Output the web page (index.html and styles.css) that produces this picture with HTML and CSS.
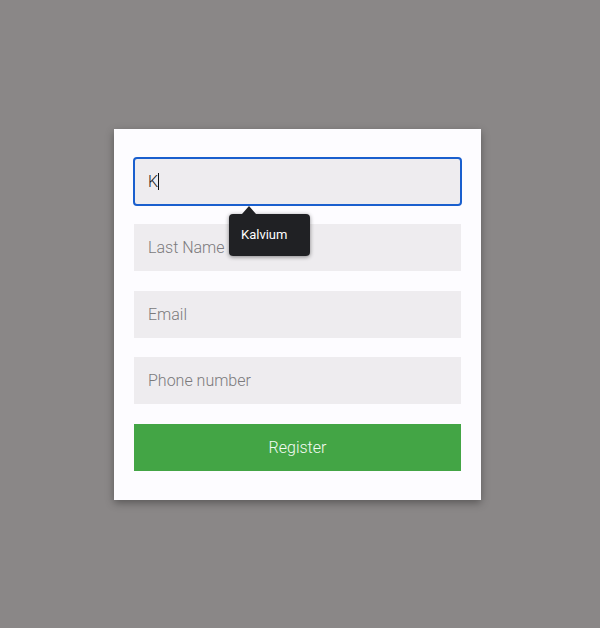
FILE: index.html
```html
<!DOCTYPE html>
<html lang="en">
<head>
<meta charset="utf-8">
<title>Register</title>
<link rel="stylesheet" href="styles.css">
</head>
<body>
<div class="backdrop">
  <form class="card">
    <div class="field-wrap">
      <div class="field focused">K<span class="caret"></span></div>
      <div class="tooltip">Kalvium</div>
    </div>
    <input class="field" type="text" placeholder="Last Name">
    <input class="field" type="email" placeholder="Email">
    <input class="field" type="tel" placeholder="Phone number">
    <button class="btn" type="button">Register</button>
  </form>
</div>
</body>
</html>
```

FILE: styles.css
```css
html, body {
  margin: 0;
  padding: 0;
}
body {
  font-family: Roboto, "Liberation Sans", sans-serif;
}
.backdrop {
  width: 600px;
  height: 628px;
  background: #8a8787;
  display: flex;
  align-items: center;
  justify-content: center;
}
.card {
  width: 367px;
  box-sizing: border-box;
  padding: 29px 20px 29px 20px;
  margin-right: 5px;
  background: #fdfcff;
  box-shadow: 0 3px 8px rgba(0, 0, 0, 0.35);
  display: flex;
  flex-direction: column;
  gap: 19.5px;
}
.field-wrap {
  position: relative;
}
.field {
  display: flex;
  align-items: center;
  box-sizing: border-box;
  width: 100%;
  height: 47px;
  margin: 0;
  padding: 0 14px;
  border: none;
  background: #eeecef;
  font-family: Roboto, "Liberation Sans", sans-serif;
  font-size: 16px;
  font-weight: 300;
  color: #222;
  outline: none;
}
.field::placeholder {
  color: #7b7a7c;
  opacity: 1;
}
.focused {
  outline: 2px solid #1a5fce;
  outline-offset: -1px;
  border-radius: 3px;
}
.caret {
  display: inline-block;
  width: 1px;
  height: 17px;
  background: #111;
  margin-left: 0;
}
.tooltip {
  position: absolute;
  left: 95px;
  top: 56px;
  width: 81px;
  height: 42px;
  box-sizing: border-box;
  padding-left: 12px;
  display: flex;
  align-items: center;
  background: #202124;
  color: #fff;
  font-family: Roboto, "Liberation Sans", sans-serif;
  font-size: 13px;
  font-weight: 400;
  border-radius: 4px;
  box-shadow: 0 1px 4px rgba(0, 0, 0, 0.45);
  z-index: 2;
}
.tooltip::before {
  content: "";
  position: absolute;
  left: 13px;
  top: -8px;
  border-left: 7px solid transparent;
  border-right: 7px solid transparent;
  border-bottom: 8px solid #202124;
}
.btn {
  height: 47px;
  margin: 0;
  border: none;
  background: #43a545;
  color: #f4fbf3;
  font-family: Roboto, "Liberation Sans", sans-serif;
  font-size: 16px;
  font-weight: 300;
  cursor: pointer;
}
```
